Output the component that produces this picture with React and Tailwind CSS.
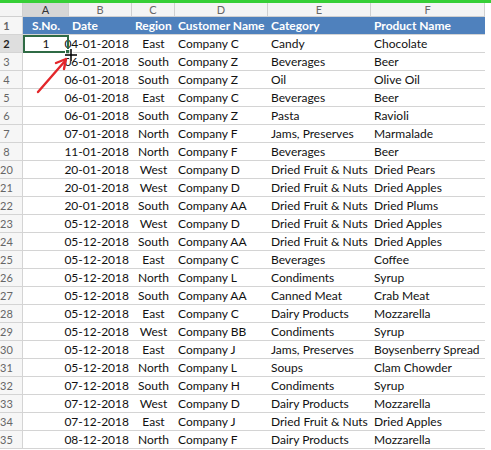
import React from "react";

const rows = [
  ["3", "06-01-2018", "South", "Company Z", "Beverages", "Beer"],
  ["4", "06-01-2018", "South", "Company Z", "Oil", "Olive Oil"],
  ["5", "06-01-2018", "East", "Company C", "Beverages", "Beer"],
  ["6", "06-01-2018", "South", "Company Z", "Pasta", "Ravioli"],
  ["7", "07-01-2018", "North", "Company F", "Jams, Preserves", "Marmalade"],
  ["8", "11-01-2018", "North", "Company F", "Beverages", "Beer"],
  ["20", "20-01-2018", "West", "Company D", "Dried Fruit & Nuts", "Dried Pears"],
  ["21", "20-01-2018", "West", "Company D", "Dried Fruit & Nuts", "Dried Apples"],
  ["22", "20-01-2018", "South", "Company AA", "Dried Fruit & Nuts", "Dried Plums"],
  ["23", "05-12-2018", "West", "Company D", "Dried Fruit & Nuts", "Dried Apples"],
  ["24", "05-12-2018", "South", "Company AA", "Dried Fruit & Nuts", "Dried Apples"],
  ["25", "05-12-2018", "East", "Company C", "Beverages", "Coffee"],
  ["26", "05-12-2018", "North", "Company L", "Condiments", "Syrup"],
  ["27", "05-12-2018", "South", "Company AA", "Canned Meat", "Crab Meat"],
  ["28", "05-12-2018", "East", "Company C", "Dairy Products", "Mozzarella"],
  ["29", "05-12-2018", "West", "Company BB", "Condiments", "Syrup"],
  ["30", "05-12-2018", "East", "Company J", "Jams, Preserves", "Boysenberry Spread"],
  ["31", "05-12-2018", "North", "Company L", "Soups", "Clam Chowder"],
  ["32", "07-12-2018", "South", "Company H", "Condiments", "Syrup"],
  ["33", "07-12-2018", "West", "Company D", "Dairy Products", "Mozzarella"],
  ["34", "07-12-2018", "East", "Company J", "Dried Fruit & Nuts", "Dried Apples"],
  ["35", "08-12-2018", "North", "Company F", "Dairy Products", "Mozzarella"],
];

function RowNum({ n, selected }) {
  return (
    <div
      className={
        "w-[23px] shrink-0 h-full flex items-center border-r border-b border-[#d4d4d4] " +
        (selected ? "bg-[#dedede] text-[#222] font-bold" : "bg-[#f6f6f6] text-[#666]")
      }
    >
      <span className="w-[13px] text-center text-[11px]">{n}</span>
    </div>
  );
}

function DataRow({ r }) {
  return (
    <div className="flex h-[18px] items-stretch text-[12px] text-[#111] leading-none whitespace-nowrap">
      <RowNum n={r[0]} />
      <div className="w-[46px] shrink-0 border-b border-[#d4d4d4]" />
      <div className="w-[63px] shrink-0 border-b border-[#d4d4d4] flex items-center justify-end pr-[3px]">{r[1]}</div>
      <div className="w-[43px] shrink-0 border-b border-[#d4d4d4] flex items-center justify-center">{r[2]}</div>
      <div className="w-[93px] shrink-0 border-b border-[#d4d4d4] flex items-center pl-[3px]">{r[3]}</div>
      <div className="w-[103px] shrink-0 border-b border-[#d4d4d4] flex items-center pl-[3px]">{r[4]}</div>
      <div className="w-[114px] shrink-0 border-b border-[#d4d4d4] flex items-center pl-[3px]">{r[5]}</div>
    </div>
  );
}

export default function App() {
  const colHead = (label, w, sel) => (
    <div
      className={
        "shrink-0 h-full flex items-center justify-center border-r border-b border-[#d0d0d0] text-[11px] " +
        (sel ? "bg-[#d6d6d6] text-[#333]" : "bg-[#f4f4f4] text-[#666]") +
        " " + w
      }
    >
      {label}
    </div>
  );
  return (
    <div
      className="relative w-[491px] h-[450px] overflow-hidden bg-white"
      style={{ fontFamily: "Lato, 'Noto Sans', sans-serif" }}
    >
      <div className="h-[3px] bg-[#36cf36]" />
      <div className="flex h-[14px] leading-none">
        <div className="w-[23px] shrink-0 h-full bg-[#f4f4f4] border-r border-b border-[#d0d0d0]" />
        {colHead("A", "w-[46px]", true)}
        {colHead("B", "w-[63px]")}
        {colHead("C", "w-[43px]")}
        {colHead("D", "w-[93px]")}
        {colHead("E", "w-[103px]")}
        {colHead("F", "w-[114px]")}
      </div>
      {/* header row */}
      <div className="flex h-[18px] items-stretch text-[12px] leading-none font-bold text-white whitespace-nowrap">
        <RowNum n="1" />
        <div className="w-[462px] shrink-0 flex bg-[#4f81bd] border-b border-[#d4d4d4]">
          <div className="w-[46px] flex items-center justify-center">S.No.</div>
          <div className="w-[63px] flex items-center pl-[3px]">Date</div>
          <div className="w-[43px] flex items-center pl-[3px]">Region</div>
          <div className="w-[93px] flex items-center pl-[3px]">Customer Name</div>
          <div className="w-[103px] flex items-center pl-[3px]">Category</div>
          <div className="w-[114px] flex items-center pl-[3px]">Product Name</div>
        </div>
      </div>
      {/* row 2 */}
      <div className="flex h-[18px] items-stretch text-[12px] text-[#111] leading-none whitespace-nowrap">
        <RowNum n="2" selected />
        <div className="relative w-[46px] shrink-0 border-2 border-[#2f6b45] flex items-center justify-center">
          1
          <div className="absolute -right-[4px] -bottom-[4px] w-[6px] h-[6px] bg-[#2f6b45] border border-white" />
        </div>
        <div className="w-[63px] shrink-0 border-b border-[#d4d4d4] flex items-center justify-end pr-[3px]">04-01-2018</div>
        <div className="w-[43px] shrink-0 border-b border-[#d4d4d4] flex items-center justify-center">East</div>
        <div className="w-[93px] shrink-0 border-b border-[#d4d4d4] flex items-center pl-[3px]">Company C</div>
        <div className="w-[103px] shrink-0 border-b border-[#d4d4d4] flex items-center pl-[3px]">Candy</div>
        <div className="w-[114px] shrink-0 border-b border-[#d4d4d4] flex items-center pl-[3px]">Chocolate</div>
      </div>
      {rows.map((r) => (
        <DataRow key={r[0]} r={r} />
      ))}
      {/* cursor crosshair */}
      <svg className="absolute left-[64px] top-[48px]" width="14" height="14" viewBox="0 0 14 14">
        <path d="M7 1v12M1 7h12" stroke="#fff" strokeWidth="3.5" />
        <path d="M7 1v12M1 7h12" stroke="#000" strokeWidth="1.5" />
      </svg>
      {/* red arrow */}
      <svg className="absolute left-[30px] top-[54px]" width="44" height="46" viewBox="0 0 44 46">
        <path d="M8 38 L35 7" stroke="#e3262a" strokeWidth="2.4" strokeLinecap="round" fill="none" />
        <path d="M36 5 L26 9 M36 5 L34 15" stroke="#e3262a" strokeWidth="2.4" strokeLinecap="round" fill="none" />
      </svg>
    </div>
  );
}
